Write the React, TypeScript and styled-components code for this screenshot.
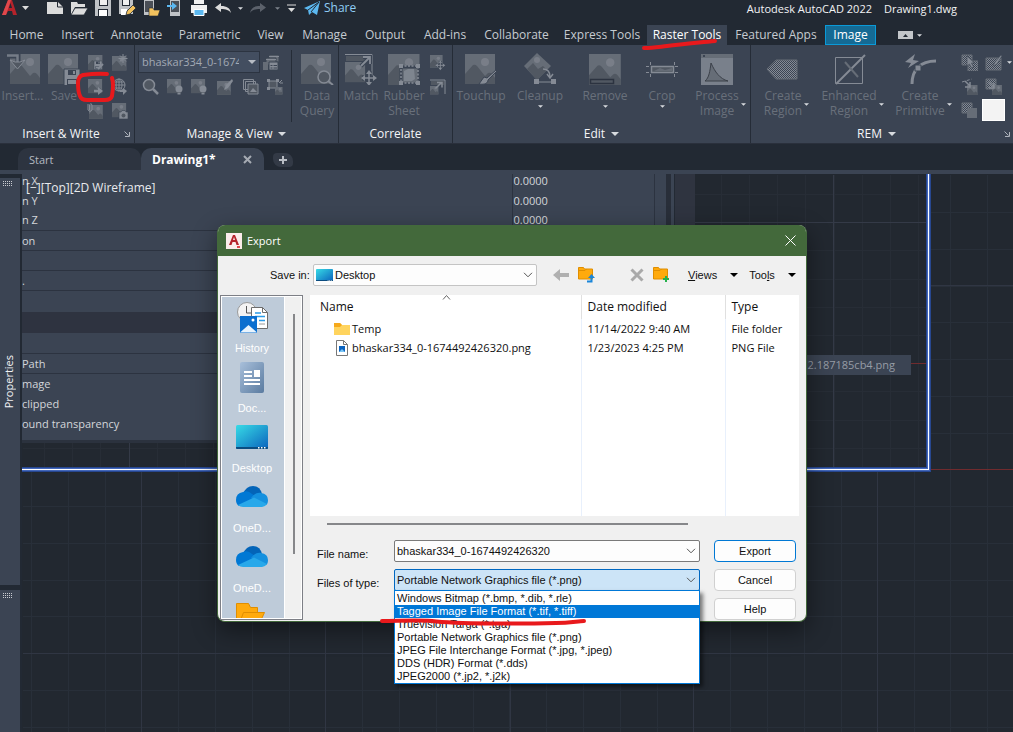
import React from "react";
import styled, { createGlobalStyle } from "styled-components";

const GlobalStyle = createGlobalStyle`
  *, *::before, *::after { box-sizing: border-box; }
  body {
    margin: 0;
    background: #222933;
    font-family: "Open Sans", "Noto Sans", sans-serif;
    font-size: 11px;
    line-height: 16px;
    color: #dfe2e6;
  }
  button, input, select { font: inherit; color: inherit; margin: 0; padding: 0; border: 0; background: none; }
  svg { flex: none; }
`;

const dialogFont = `"Liberation Sans", Arial, sans-serif`;

const Shell = styled.div`
  position: relative;
  display: flex;
  flex-direction: column;
  min-height: 100vh;
  overflow: hidden;
`;

/* ---------- title bar ---------- */

const TitleBar = styled.header`
  display: flex;
  align-items: flex-start;
  justify-content: space-between;
  height: 25px;
  overflow: hidden;
`;

const QuickAccess = styled.div`
  display: flex;
  height: 16px;
`;

const QuickButton = styled.button<{ $w?: number }>`
  width: ${(p) => p.$w ?? 24}px;
  height: 16px;
  display: flex;
  align-items: center;
  justify-content: center;
`;

const AppMenu = styled(QuickButton)`
  justify-content: flex-start;
  padding-left: 2px;
`;

const ShareLink = styled.a`
  display: flex;
  align-items: center;
  gap: 4px;
  height: 16px;
  padding-left: 5px;
  font-size: 12px;
  color: #8fcdf5;
  text-decoration: none;
`;

const WindowTitle = styled.h1`
  display: flex;
  gap: 12px;
  margin: 0;
  padding: 1px 56px 0 0;
  font-size: 11px;
  font-weight: 400;
  color: #f2f3f5;
`;

/* ---------- ribbon tabs ---------- */

const RibbonTabs = styled.nav`
  display: flex;
  height: 20px;
  font-size: 12px;
`;

const RibbonTab = styled.button<{ $w: number; $kind?: "active" | "context" }>`
  width: ${(p) => p.$w}px;
  height: 20px;
  white-space: nowrap;
  line-height: 18px;
  color: ${(p) => (p.$kind ? "#ffffff" : "#c6cbd1")};
  background: ${(p) => (p.$kind === "active" ? "#3b4453" : p.$kind === "context" ? "#156a94" : "transparent")};
  border: ${(p) => (p.$kind === "context" ? "1px solid #0a9ad8" : "0")};
`;

const RibbonToggle = styled.button`
  display: flex;
  align-items: center;
  gap: 4px;
  margin-left: 22px;
`;

/* ---------- ribbon ---------- */

const Ribbon = styled.section`
  display: flex;
  height: 99px;
  background: #3b4453;
  border-bottom: 1px solid #2a303c;
  overflow: hidden;
`;

const RibbonPanel = styled.div<{ $w: number }>`
  flex: 0 0 ${(p) => p.$w}px;
  min-width: 0;
  display: flex;
  flex-direction: column;
  border-right: 1px solid #252c37;
`;

const PanelBody = styled.div<{ $pad?: number }>`
  display: flex;
  height: 80px;
  padding: 5px 0 0 ${(p) => p.$pad ?? 0}px;
`;

const PanelTitle = styled.div<{ $launcher?: boolean }>`
  display: flex;
  align-items: center;
  justify-content: center;
  gap: 6px;
  position: relative;
  height: 17px;
  padding-right: ${(p) => (p.$launcher ? 12 : 0)}px;
  font-size: 12px;
  color: #f4f5f7;
`;

const Launcher = styled.button`
  position: absolute;
  right: 4px;
  top: 6px;
  display: flex;
`;

const BigButton = styled.button<{ $w: number }>`
  flex: 0 0 ${(p) => p.$w}px;
  display: flex;
  flex-direction: column;
  align-items: center;
  color: #69707b;
  font-size: 12px;
  line-height: 15px;
  height: 72px;
  padding-top: 3px;
  white-space: nowrap;
  > svg { margin-bottom: 3px; }
`;

const BigLabel = styled.span`
  position: relative;
  display: block;
  text-align: center;
`;

const ArrowUnder = styled.span`
  display: flex;
  padding-top: 2px;
`;

const ArrowBeside = styled.span`
  position: absolute;
  left: 100%;
  top: 15px;
  display: flex;
  padding-left: 2px;
`;

const SmallGrid = styled.div<{ $cols: string }>`
  display: grid;
  grid-template-columns: ${(p) => p.$cols};
  grid-auto-rows: 24px;
`;

const SmallButton = styled.button`
  display: flex;
  align-items: center;
  justify-content: center;
`;

const ManageColumn = styled.div`
  display: flex;
  flex-direction: column;
  flex: none;
  width: 154px;
  height: 72px;
  border-right: 1px solid #252c37;
`;

const ManageTop = styled.div`
  display: flex;
  align-items: center;
  height: 24px;
  gap: 2px;
`;

const ImagePicker = styled.label`
  position: relative;
  display: flex;
  align-items: center;
  width: 122px;
  height: 22px;
  border: 1px solid #2c3441;
  background: #434e60;
  select {
    appearance: none;
    width: 100px;
    padding-left: 3px;
    color: #a2a9b4;
    overflow: hidden;
  }
  svg { margin-left: 9px; }
`;

const Swatch = styled.button`
  width: 23px;
  height: 22px;
  margin-top: 1px;
  background: #f3f3f3;
  border: 1px solid #ffffff;
  justify-self: center;
`;

/* ---------- document tabs ---------- */

const DocTabs = styled.nav`
  display: flex;
  align-items: flex-end;
  height: 26px;
  padding-left: 18px;
`;

const DocTab = styled.button<{ $active?: boolean }>`
  display: flex;
  align-items: center;
  justify-content: space-between;
  width: 123px;
  height: 22px;
  padding: 1px 12px 0 11px;
  font-size: ${(p) => (p.$active ? 12 : 11)}px;
  border-radius: 10px 10px 0 0;
  background: ${(p) => (p.$active ? "#3b4453" : "#2d3440")};
  color: ${(p) => (p.$active ? "#ffffff" : "#b4b9c1")};
  font-weight: ${(p) => (p.$active ? 700 : 400)};
`;

const NewTab = styled.button`
  width: 20px;
  height: 14px;
  margin: 0 0 3px 9px;
  border-radius: 4px 8px 4px 8px;
  background: #333a46;
  display: flex;
  align-items: center;
  justify-content: center;
`;

/* ---------- workspace ---------- */

const Workspace = styled.main`
  flex: 1;
  display: flex;
  border-top: 4px solid #3b4453;
`;

const Rail = styled.aside`
  flex: 0 0 22px;
  display: flex;
  flex-direction: column;
  gap: 5px;
  padding: 4px 2px 0 0;
  background: #222933;
`;

const RailPart = styled.div<{ $h?: number }>`
  ${(p) => (p.$h ? `height: ${p.$h}px;` : "flex: 1;")}
  display: flex;
  flex-direction: column;
  align-items: center;
  background: #3b4453;
  padding: 3px 5px 0 0;
`;

const RailName = styled.span`
  writing-mode: vertical-rl;
  transform: rotate(180deg);
  margin: 169px -2px 0 0;
  line-height: 16px;
  color: #f2f3f5;
`;

const Canvas = styled.div`
  position: relative;
  flex: 1;
  min-width: 0;
`;

const GridDrawing = styled.svg`
  position: absolute;
  inset: 0;
  width: 100%;
  height: 100%;
`;

const PaletteLayer = styled.div`
  position: relative;
  display: flex;
  width: 673px;
  height: 269px;
  border-bottom: 3px solid #2b323e;
  background: #3b4453;
`;

const PropertyTable = styled.table`
  align-self: flex-start;
  width: 632px;
  border-collapse: collapse;
  table-layout: fixed;
  td {
    height: 20px;
    padding: 0;
    line-height: 15px;
    color: #d3d6da;
  }
  tr:first-child td {
    height: 16px;
    line-height: 14px;
    vertical-align: top;
  }
  td + td { border-left: 1px solid #2c3340; padding-left: 1px; }
  td:first-child { width: 490px; }
`;

const PropertyRow = styled.tr<{ $line?: boolean; $head?: boolean }>`
  border-bottom: ${(p) => (p.$line ? "1px solid #2c3340" : "0")};
  background: ${(p) => (p.$head ? "#2e3340" : "transparent")};
  && td { ${(p) => (p.$head ? "height: 23px; border-top: 3px solid #3b4453;" : "")} }
`;

const PaletteEdge = styled.div`
  flex: 1;
  display: grid;
  grid-template-columns: 11px 5px 3px 1fr;
  border-left: 1px solid #2c3340;
  > :nth-child(2) { background: #282e39; }
  > :nth-child(4) { background: #2f3440; border-left: 1px solid #232a34; }
`;

const ViewLabel = styled.div`
  position: absolute;
  left: 4px;
  top: 6px;
  font-size: 12px;
  color: #e9ebee;
`;

const PathTip = styled.div`
  position: absolute;
  left: 700px;
  top: 181px;
  width: 189px;
  height: 20px;
  padding-right: 16px;
  line-height: 20px;
  text-align: right;
  background: #3b4453;
  color: #969ca6;
`;

/* ---------- export dialog ---------- */

const Dialog = styled.section`
  position: absolute;
  left: 217px;
  top: 225px;
  width: 590px;
  border: 1px solid #43693b;
  border-top: 0;
  border-radius: 8px;
  background: #f0f0f0;
  color: #101010;
  box-shadow: 0 8px 24px rgba(0, 0, 0, 0.45);
`;

const DialogTitle = styled.header`
  display: flex;
  align-items: center;
  gap: 5px;
  height: 31px;
  padding: 0 10px 0 8px;
  background: #43693b;
  color: #ffffff;
  border-radius: 7px 7px 0 0;
  button { margin-left: auto; display: flex; }
`;

const Toolbar = styled.div`
  display: flex;
  align-items: center;
  height: 39px;
  padding: 0 9px 2px 52px;
  font-family: ${dialogFont};
`;

const SaveInLabel = styled.label`
  width: 43px;
  white-space: nowrap;
`;

const ComboShell = styled.div<{ $w?: number; $edge: string; $fill?: string }>`
  display: flex;
  flex: none;
  align-items: center;
  gap: 2px;
  width: ${(p) => (p.$w ? `${p.$w}px` : "100%")};
  height: 22px;
  padding: 0 3px 0 2px;
  border: 1px solid ${(p) => p.$edge};
  border-radius: 2px;
  background: ${(p) => p.$fill ?? "#fdfdfd"};
  select, input {
    flex: 1;
    min-width: 0;
    appearance: none;
    outline: 0;
    line-height: 16px;
  }
`;

const ToolButton = styled.button<{ $ml: number }>`
  display: flex;
  align-items: center;
  margin-left: ${(p) => p.$ml}px;
  gap: 13px;
`;

const DialogBody = styled.div`
  display: flex;
  gap: 7px;
  padding: 0 7px 1px 2px;
`;

const Places = styled.div`
  display: flex;
  width: 83px;
  height: 325px;
  border: 1px solid #7d7f86;
  outline: 1px solid #ffffff;
  outline-offset: -2px;
`;

const PlaceList = styled.div`
  width: 63px;
  height: 323px;
  overflow: hidden;
  padding-top: 2px;
  background: #becbd9;
  border-top: 1px solid #fff;
  border-bottom: 1px solid #fff;
`;

const Place = styled.button`
  display: flex;
  flex-direction: column;
  align-items: center;
  justify-content: space-between;
  width: 62px;
  height: 60px;
  padding-bottom: 3px;
  color: #ffffff;
  font-family: ${dialogFont};
`;

const ScrollTrack = styled.div`
  flex: 1;
  display: flex;
  justify-content: center;
  padding-top: 18px;
  border-left: 1px solid #fff;
  &::after {
    content: "";
    width: 2px;
    height: 240px;
    background: #86878a;
  }
`;

const Main = styled.div`
  flex: 1;
  min-width: 0;
`;

const FileTable = styled.table`
  width: 100%;
  height: 221px;
  border-collapse: collapse;
  table-layout: fixed;
  background: #ffffff;
  th {
    height: 24px;
    padding: 0 0 0 6px;
    text-align: left;
    font-size: 12px;
    font-weight: 400;
    border-left: 1px solid #e0e0e0;
  }
  td {
    height: 19px;
    padding: 0 0 0 6px;
    white-space: nowrap;
    border-left: 1px solid #e8f0fc;
  }
  th:first-child, td:first-child { border-left: 0; }
  th:first-child { padding-left: 10px; }
  td:first-child { padding-left: 24px; }
`;

const FillerRow = styled.tr`
  && td { height: 159px; }
`;

const NameCell = styled.span`
  display: flex;
  align-items: center;
  gap: 2px;
`;

const SortMark = styled.svg`
  position: absolute;
  left: 224px;
  top: 70px;
`;

const HorizontalThumb = styled.div`
  width: 361px;
  height: 2px;
  margin: 7px 0 15px 17px;
  background: #86878a;
`;

const Form = styled.form`
  display: grid;
  grid-template-columns: 77px 306px 96px;
  grid-auto-rows: 22px;
  row-gap: 7px;
  padding-left: 7px;
  font-family: ${dialogFont};
`;

const FieldLabel = styled.label`
  padding-top: 6px;
  white-space: nowrap;
`;

const PushButton = styled.button<{ $primary?: boolean }>`
  width: 82px;
  height: 22px;
  justify-self: end;
  border: 1px solid ${(p) => (p.$primary ? "#0078d4" : "#d0d0d0")};
  border-radius: 4px;
  background: #fdfdfd;
`;

const TypeField = styled.div`
  position: relative;
`;

const TypeList = styled.ul`
  position: absolute;
  left: 0;
  top: 21px;
  width: 100%;
  margin: 0;
  padding: 1px 0 0;
  list-style: none;
  border: 1px solid #0078d7;
  background: #ffffff;
  box-shadow: 3px 3px 4px rgba(0, 0, 0, 0.5);
`;

const TypeOption = styled.li<{ $on: boolean }>`
  height: 13px;
  line-height: 13px;
  padding-left: 2px;
  color: ${(p) => (p.$on ? "#ffffff" : "#101010")};
  background: ${(p) => (p.$on ? "#0078d7" : "transparent")};
`;

const Ink = styled.svg`
  position: absolute;
  left: 0;
  top: 0;
  width: 1013px;
  height: 732px;
  pointer-events: none;
`;

/* ---------- drawings ---------- */

const L = "#666d77";
const D = "#515862";
const H = "#858b95";
const BG = "#3b4453";
const W = "#dcdcdc";

const Down = ({ w = 8, color = "#d8dbdf" }: { w?: number; color?: string }) => (
  <svg width={w} height={Math.ceil(w / 2)} viewBox="0 0 8 4"><path d="M0 0h8L4 4z" fill={color} /></svg>
);

const Chevron = ({ color = "#555" }: { color?: string }) => (
  <svg width="10" height="6" viewBox="0 0 10 6" fill="none" stroke={color}><path d="M1 .8l4 4 4-4" /></svg>
);

/* A picture tile: sky, sun and two hills, in a 30-unit box. */
const Tile = ({ x = 0, y = 0, s = 1 }: { x?: number; y?: number; s?: number }) => (
  <g transform={`translate(${x} ${y}) scale(${s})`}>
    <path d="M0 0h30v30H0z" fill={L} />
    <circle cx="20" cy="8" r="4" fill={H} opacity=".6" />
    <path d="M0 20l8-9q2-1 4 1l8 10 3-3q2-1 4 1l3 4v6H0z" fill={D} />
  </g>
);

const Big = ({ children }: { children: React.ReactNode }) => (
  <svg width="34" height="32" viewBox="0 0 34 32" fill="none">{children}</svg>
);
const Small = ({ children }: { children: React.ReactNode }) => (
  <svg width="17" height="17" viewBox="0 0 17 17" fill="none">{children}</svg>
);

const Floppy = ({ x, y, s = 1 }: { x: number; y: number; s?: number }) => (
  <g transform={`translate(${x} ${y}) scale(${s})`}>
    <path d="M0 0h16v17H0z" fill={H} stroke={BG} />
    <path d="M4 1h8v5H4zM3 10h10v6H3z" fill={BG} />
    <path d="M9 2h2v3H9zM4 11h8v4H4z" fill={H} />
  </g>
);

const Move = ({ x, y, s = 1 }: { x: number; y: number; s?: number }) => (
  <g transform={`translate(${x} ${y}) scale(${s})`}>
    <path d="M7 0v14M0 7h14" stroke={BG} strokeWidth="5" />
    <path d="M7 2v10M2 7h10" stroke={H} strokeWidth="1.500" />
    <path d="M7-1l3 4H4zM7 15l3-4H4zM-1 7l4-3v6zM15 7l-4-3v6z" fill={H} />
  </g>
);

const Hatch = () => (
  <defs>
    <pattern id="hatch" width="2" height="2" patternUnits="userSpaceOnUse">
      <path d="M0 0h1v1H0zM1 1h1v1H1z" fill={H} />
    </pattern>
  </defs>
);

const bigIcons: Record<string, React.ReactNode> = {
  insert: <Big><Tile x={4} y={1} /><path d="M1 3h11v10" stroke={BG} strokeWidth="5" /><path d="M1 2.500h10.500v12" stroke={H} strokeWidth="2.500" opacity=".8" /><path d="M4 7l7.500 9L19 7l-5 2h-5z" fill={D} stroke={H} /></Big>,
  save: <Big><Tile x={1} y={1} /><Floppy x={17} y={16} /></Big>,
  query: <Big><Tile x={1} y={1} /><circle cx="24" cy="24" r="6" fill={D} stroke={H} strokeWidth="1.500" /><path d="M28 28l5 4" stroke={H} strokeWidth="2" /></Big>,
  match: <Big><path d="M1 1.500h27v23" stroke={H} /><path d="M2 3h25v5H2z" fill={D} /><Tile x={1} y={9} s={.67} /><path d="M17 13l8-8M19 4h7v7" stroke={BG} strokeWidth="4" /><path d="M17 13l8-8M19 4h7v7" stroke={H} strokeWidth="1.800" /><Move x={18} y={18} /></Big>,
  rubber: <Big><Tile x={1} y={1} s={1.05} /><path d="M14 14h18v17H14z" fill={L} stroke={BG} strokeWidth="3" /><path d="M14 13h17v17H14z" stroke={H} strokeDasharray="2 1.500" strokeWidth="1.500" /><path d="M12 11h4v4h-4zM29 11h4v4h-4zM12 28h4v4h-4zM29 28h4v4h-4z" fill={H} /><path d="M17 18l4-2h6l1 10-3 2h-8z" fill={H} opacity=".8" /></Big>,
  touchup: <Big><Tile x={1} y={1} /><path d="M32 17l-9 8-3-1-5 7c6 1 9-1 9-4l9-9z" fill={H} stroke={BG} /></Big>,
  cleanup: <Big><path d="M14 0l14 13-14 14L1 13z" fill={L} /><circle cx="14" cy="7" r="3" fill={H} opacity=".6" /><path d="M4 16l6-6 5 6 5-3 4 4-10 10z" fill={D} /><path d="M20 16c5 0 7 3 7 8m-3-3l3 4 3-4" stroke={H} strokeWidth="1.500" /><path d="M14 29h17" stroke={H} /><path d="M11 26h5v5h-5zM28 26h5v5h-5z" fill={H} /></Big>,
  remove: <Big><Tile x={1} y={1} s={1.06} /><path d="M2.500 26.500h23v4h-23z" fill={D} stroke="#2c3340" strokeWidth="1.500" /></Big>,
  crop: <Big><path d="M6.500 13.500h22v6h-22z" fill={D} stroke={H} strokeWidth="1.500" /><path d="M9 18l6-3 5 2 7-2v3z" fill={L} /><path d="M1 13.500h3M1 19.500h3M30 13.500h3M30 19.500h3M5.500 9v3M29.500 9v3M5.500 21v3M29.500 21v3" stroke={H} /></Big>,
  process: <Big><path d="M1 1h32v31H1z" fill={H} opacity=".85" /><path d="M1 1h32v4H1z" fill={L} /><path d="M3 2h2v2H3z" fill={BG} /><path d="M5 28c4-3 5-10 6-18 4 9 9 16 17 18z" fill={L} stroke="#3b4049" /></Big>,
  region: <Big><Hatch /><path d="M1 16l9-9h21v19H10z" fill="url(#hatch)" stroke={L} /></Big>,
  enhanced: <Big><path d="M3.500 4.500h27v26h-27z" stroke={H} /><path d="M4 31L33 2" stroke={H} strokeWidth="2" /><path d="M13 9l13 15" stroke={L} strokeWidth="2" /></Big>,
  primitive: <Big><path d="M9 31c0-14 8-23 24-23" stroke={H} strokeWidth="3" /><path d="M12 1L2 9l6 1-3 5 11-7-6-1z" fill={H} /><path d="M12 12h6v6h-6z" fill={H} stroke={BG} /></Big>,
};

const smallIcons: Record<string, React.ReactNode> = {
  saveAs: <Small><Tile x={1} y={1} s={.48} /><Floppy x={7} y={7} s={.5} /><path d="M11 15l5-5" stroke={H} strokeWidth="2" /></Small>,
  fresh: <Small><Tile x={1} y={2} s={.48} /><path d="M12 0v9M7.500 4.500h9M9 1.500l6 6M15 1.500l-6 6" stroke={H} /></Small>,
  exportPic: <Small><Tile x={1} y={1} s={.47} /><path d="M7 13h5" stroke={H} strokeWidth="2.500" /><path d="M11 9l5 4-5 4z" fill={H} /></Small>,
  globe: <Small><circle cx="8" cy="7" r="6" stroke={H} /><path d="M2 7h12M8 1v12M3 4h10M3 10h8" stroke={H} /><ellipse cx="8" cy="7" rx="3" ry="6" stroke={H} /><path d="M9 13h4" stroke={H} strokeWidth="2" /><path d="M12 10l4 3-4 4z" fill={H} /></Small>,
  clip: <Small><Tile x={2} y={3} s={.46} /><path d="M1 2v6q2 3 4 0V3q-1-3-2.500 0v5" stroke={H} /></Small>,
  camera: <Small><Tile x={1} y={1} s={.47} /><path d="M8 10h2l1-1.500h3l1 1.500h2v7H8z" fill={H} stroke={BG} strokeWidth=".6" /><circle cx="12.500" cy="13.500" r="2" fill={D} /></Small>,
  cards: <Small><path d="M7 1h10v7h-10z" fill={L} stroke={BG} /><path d="M7 2.500h10" stroke={H} /><path d="M4 4h10v7H4z" fill={L} stroke={BG} /><path d="M4 5.500h10" stroke={H} /><path d="M1 8h5v8H1z" fill={L} /><path d="M7 8h9v8H7z" fill={H} stroke={BG} /><path d="M8.500 11.500h2M11.500 11.500h3.500M8.500 14h2M11.500 14h3.500" stroke={BG} /></Small>,
  zoom: <Small><circle cx="7" cy="7" r="5.500" fill={D} stroke={H} strokeWidth="1.500" /><path d="M11 11l5 5" stroke={H} strokeWidth="2.500" /></Small>,
  bulb: <Small><Tile x={1} y={1} s={.47} /><circle cx="13" cy="11" r="3.500" fill={H} /><path d="M11.500 15h3v1.500h-3z" fill={H} /></Small>,
  brush: <Small><Tile x={1} y={3} s={.46} /><path d="M16 1l-6 6-2 5 4-2 5-7z" fill={H} /></Small>,
  stack: <Small><path d="M1.500 1.500h10v10h-10zM3.500 3.500h10v10h-10z" stroke={H} /><path d="M6 6h10v10H6z" fill={D} stroke={H} /><path d="M8 14l3-4 4 4z" fill={H} /></Small>,
  nodes: <Small><path d="M3 3h8v7H3z" fill={D} stroke={H} /><path d="M1 1h3v3H1zM10 1h3v3h-3zM1 9h3v3H1z" fill={H} /><Tile x={9} y={9} s={.25} /><path d="M13 5l3-3M14 5h3" stroke={H} /></Small>,
  nudge: <Small><Tile x={1} y={1} s={.42} /><Move x={7} y={7} s={.62} /></Small>,
  scale: <Small><path d="M1 2h15v14" stroke={H} /><path d="M2 3h13v4H2z" fill={D} /><Tile x={1} y={8} s={.28} /><path d="M7 10l5-5M8 4.500h5v5" stroke={H} strokeWidth="1.500" /></Small>,
  pickHatch: <Small><path d="M1 1h10v10H1zM7 7h10v10H7z" fill="url(#hatch)" stroke={L} /><path d="M6 2v10l2.500-2 2 4 2-1-2-4h3z" fill={H} stroke={BG} strokeWidth=".6" /></Small>,
  editHatch: <Small><path d="M1 4h15v12H1z" fill="url(#hatch)" stroke={L} /><path d="M16 1l-6 7-2 4 4-2 5-8z" fill={H} stroke={BG} strokeWidth=".6" /></Small>,
  pathIn: <Small><path d="M1 4l10-3" stroke={H} strokeDasharray="3 2" /><Tile x={6} y={7} s={.35} /><path d="M4 3l5 5M9 4v5H4" stroke={H} strokeWidth="1.500" /></Small>,
  hatchIn: <Small><path d="M1 1h10v10H1z" fill="url(#hatch)" stroke={L} /><Tile x={7} y={7} s={.33} /><path d="M4 4l5 5M9 5v5H4" stroke={H} strokeWidth="1.500" /></Small>,
  overlap: <Small><path d="M1 1h10v10H1z" fill="url(#hatch)" stroke={L} /><path d="M6 6h10v10H6z" fill={L} /></Small>,
};

const LauncherMark = <svg width="6" height="6" viewBox="0 0 6 6" fill="none" stroke="#aeb3bb"><path d="M.5.5l4 4M5.500 1v4.500H1" /></svg>;
const Grip = <svg width="10" height="5" viewBox="0 0 10 5"><path d="M0 .5h10M0 2.500h10M0 4.500h10" stroke="#c9ccd1" strokeDasharray="1 1" /></svg>;

const Folder = ({ children }: { children?: React.ReactNode }) => (
  <svg width="17" height="17" viewBox="0 0 17 17">
    <path d="M.5 1.500h5l1 1.500h8v10h-14z" fill="#ffaa0d" stroke="#e08e00" />
    <path d="M1 4.500h6l1.500-1.500" fill="none" stroke="#e08e00" />
    {children}
  </svg>
);

const ScreenIcon = ({ w, h }: { w: number; h: number }) => (
  <svg width={w} height={h} viewBox="0 0 32 24" preserveAspectRatio="none">
    <defs><linearGradient id="screen" x1="0" y1="0" x2="1" y2="1"><stop offset="0" stopColor="#37dbe6" /><stop offset="1" stopColor="#0b63bd" /></linearGradient></defs>
    <rect width="32" height="24" rx="1.500" fill="url(#screen)" />
    <path d="M0 22h32v1q0 1-1 1H1q-1 0-1-1z" fill="#0b4c80" />
    <path d="M22 22h1.500v1.500H22zM25 22h1.500v1.500H25zM28 22h1.500v1.500H28z" fill="#fff" />
  </svg>
);

const Cloud = () => (
  <svg width="34" height="40" viewBox="0 0 34 40">
    <path d="M8 15Q11 7 18 7q7 0 9 8l-9 6z" fill="#0364b8" />
    <path d="M1 21q0-7 7-8 5-2 9 2l9 5-22 7q-3-2-3-6z" fill="#0078d4" />
    <path d="M16 19q4-6 10-5 7 1 7 7 0 4-2 5z" fill="#1490df" />
    <path d="M3 26l16-7.500L32 25q-2 3-5 3H8q-3 0-5-2z" fill="#28a8ea" />
  </svg>
);

const placeIcons = {
  history: <svg width="34" height="40" viewBox="0 0 34 40"><circle cx="12" cy="13" r="9.500" fill="#f3f3f3" stroke="#9a9a9a" /><path d="M11.500 7v7h5" fill="none" stroke="#555" /><path d="M16.500 8.500h11l5 5v16h-16z" fill="#fff" stroke="#6c6c6c" /><path d="M27.500 8.500v5h5" fill="none" stroke="#6c6c6c" /><path d="M20 14h6M20 17.500h10M24 21.500h6" stroke="#2a9be8" strokeWidth="1.500" /><path d="M24 25h6" stroke="#9a9a9a" /><path d="M5 17h17v17H5z" fill="#0b6fcf" /><path d="M5 33.500l8.500-7.500 8.500 7.500z" fill="#e9f4fd" /><circle cx="18" cy="21" r="1.500" fill="#fff" /></svg>,
  documents: <svg width="34" height="36" viewBox="0 0 34 36"><defs><linearGradient id="doc" x1="0" y1="0" x2="1" y2="1"><stop offset="0" stopColor="#a8bfda" /><stop offset="1" stopColor="#5a7ba0" /></linearGradient></defs><rect x="5" y="3" width="24" height="31" rx="2" fill="url(#doc)" /><path d="M9 13h8M9 17h8M9 21h16M9 25h16" stroke="#fff" strokeWidth="2" /><path d="M19 11h6v7h-6z" fill="#fff" /></svg>,
  desktop: <svg width="34" height="34" viewBox="0 0 34 34"><g transform="translate(1 6)"><ScreenIcon w={32} h={24} /></g></svg>,
  folder: <svg width="34" height="30" viewBox="0 0 34 30"><path d="M1.500 4.500h12l2 4h7v18h-21z" fill="#ffaa0d" stroke="#e08e00" /><path d="M8.500 13.500h21l-6 13h-20z" fill="#ffaa0d" stroke="#e08e00" /></svg>,
};

const range = (from: number, to: number, step: number) => {
  const out: number[] = [];
  for (let v = from; v <= to; v += step) out.push(Math.round(v));
  return out;
};

const CanvasGrid = () => (
  <GridDrawing>
    <g transform="translate(-22 -174)" shapeRendering="crispEdges">
      <path d="M0 170h3000v2000H0z" fill="#222830" />
      <g transform="translate(.5 .5)">
        <path d={range(950, 2900, 36.8).map((x) => `M${x} 174V2000`).join("") + range(31, 928, 36.8).map((x) => `M${x} 469V2000`).join("")} stroke="#282f39" />
        <path d={range(212, 469, 36.8).map((y) => `M928 ${y}H3000`).join("") + range(506, 1900, 36.8).map((y) => `M22 ${y}H3000`).join("")} stroke="#282f39" />
        <path d="M141 469V2000M325 469V2000M510 469V2000M693 469V2000M877 469V2000M928 285H3000M22 653H3000" stroke="#303643" />
        <path d={range(44, 920, 28.2).map((x) => `M${x} 174V469`).join("") + range(194, 460, 28.2).map((y) => `M22 ${y}H928`).join("")} stroke="#272d36" />
        <path d="M129 174V469M833 174V469M22 222H928" stroke="#343a47" />
        <path d="M900 363h28M929 469h2000" stroke="#702b2e" />
        <path d="M20 469h908V170" fill="none" stroke="#27478f" strokeWidth="5" />
        <path d="M20 469h908V170" fill="none" stroke="#4468bb" strokeWidth="3" />
        <path d="M20 469h908V170" fill="none" stroke="#ffffff" />
      </g>
    </g>
  </GridDrawing>
);

/* ---------- data ---------- */

type Tab = { name: string; w: number; kind?: "active" | "context" };
const tabs: Tab[] = [
  { name: "Home", w: 53 }, { name: "Insert", w: 49 }, { name: "Annotate", w: 69 }, { name: "Parametric", w: 77 },
  { name: "View", w: 45 }, { name: "Manage", w: 63 }, { name: "Output", w: 58 }, { name: "Add-ins", w: 62 },
  { name: "Collaborate", w: 81 }, { name: "Express Tools", w: 90 }, { name: "Raster Tools", w: 80, kind: "active" },
  { name: "Featured Apps", w: 98 }, { name: "Image", w: 51, kind: "context" },
];

const fileTypes = [
  "Windows Bitmap (*.bmp, *.dib, *.rle)", "Tagged Image File Format (*.tif, *.tiff)", "Truevision Targa (*.tga)",
  "Portable Network Graphics file (*.png)", "JPEG File Interchange Format (*.jpg, *.jpeg)", "DDS (HDR) Format (*.dds)",
  "JPEG2000 (*.jp2, *.j2k)",
];

const properties: { label: string; value?: string; line?: boolean; head?: boolean }[] = [
  { label: "n X", value: "0.0000" }, { label: "n Y", value: "0.0000" }, { label: "n Z", value: "0.0000", line: true },
  { label: "on", line: true }, { label: "", line: true }, { label: ".", line: true }, { label: "", line: true },
  { label: "", head: true }, { label: "", line: true }, { label: "Path", line: true },
  { label: "mage" }, { label: "clipped" }, { label: "ound transparency" },
];

const Tool = ({ icon, lines, w, arrow }: { icon: string; lines: string[]; w: number; arrow?: "under" | "beside" }) => (
  <BigButton $w={w}>
    {bigIcons[icon]}
    <BigLabel>
      {lines.map((t) => <React.Fragment key={t}>{t}<br /></React.Fragment>)}
      {arrow === "beside" && <ArrowBeside><Down w={5} /></ArrowBeside>}
    </BigLabel>
    {arrow === "under" && <ArrowUnder><Down w={5} /></ArrowUnder>}
  </BigButton>
);

const Mini = ({ icon, label }: { icon: string; label: string }) => <SmallButton aria-label={label}>{smallIcons[icon]}</SmallButton>;

export default function App() {
  return (
    <Shell>
      <GlobalStyle />
      <TitleBar>
        <QuickAccess>
          <AppMenu $w={43} aria-label="Application menu">
            <svg width="30" height="16" viewBox="0 0 30 16"><path d="M0 15L6 0h4l5 15h-4l-1-4H6l-2 4zM7 8h3L8.500 3z" fill="#b5232b" /><path d="M0 15L6 0h3L4 15z" fill="#e0484c" /><path d="M20 6h7l-3.500 4z" fill={W} /></svg>
          </AppMenu>
          <QuickButton aria-label="New"><svg width="17" height="16" viewBox="0 0 17 16"><path d="M0 2h11l5 5v7H0z" fill={W} /><path d="M10.500 2v5H16" fill="none" stroke="#222933" /></svg></QuickButton>
          <QuickButton aria-label="Open"><svg width="18" height="16" viewBox="0 0 18 16"><path d="M1 2h6l1 2h7v3H5l-4 8z" fill={W} /><path d="M5 8h13l-4 7H1z" fill={W} stroke="#222933" strokeWidth=".8" /></svg></QuickButton>
          <QuickButton aria-label="Save"><svg width="17" height="16" viewBox="0 0 17 16"><path d="M0 0h16v16H0z" fill="#bfc2c6" /><path d="M4 0h9v6H4z" fill="#222933" /><path d="M5 0h7v5H5z" fill="#efefef" /><path d="M3 9h10v7H3z" fill="#222933" /><path d="M4 10h8v6H4z" fill="#fff" /></svg></QuickButton>
          <QuickButton aria-label="Save as"><svg width="17" height="16" viewBox="0 0 17 16"><path d="M0 0h14v14H0z" fill="#bfc2c6" /><path d="M3 0h8v6H3z" fill="#222933" /><path d="M4 0h6v5H4z" fill="#efefef" /><path d="M2 9h6v6H2z" fill="#fff" /><path d="M7 15l1-4 6-6 3 3-6 6z" fill="#f3c25e" stroke="#222933" strokeWidth=".8" /></svg></QuickButton>
          <QuickButton aria-label="Open from mobile"><svg width="17" height="16" viewBox="0 0 17 16"><path d="M1 0h10v15H1z" fill="#bfc2c6" /><path d="M2 1h8v11H2z" fill="#4a4f57" /><path d="M6 8h4l1 2h6l-2 6H6z" fill="#f3c25e" stroke="#222933" strokeWidth=".6" /></svg></QuickButton>
          <QuickButton aria-label="Save to mobile"><svg width="17" height="16" viewBox="0 0 17 16"><path d="M3 0h10v16H3z" fill="#bfc2c6" /><path d="M4 1h8v11H4z" fill="#4a4f57" /><path d="M0 5h5V2l5 4-5 4V7H0z" fill="#5cb8f0" /></svg></QuickButton>
          <QuickButton aria-label="Plot"><svg width="17" height="16" viewBox="0 0 17 16"><path d="M3 0h10v4H3zM0 5h16v8H0z" fill="#f1f1f1" /><path d="M3 9.500h10v6H3z" fill="#5cb8f0" stroke="#fff" /></svg></QuickButton>
          <QuickButton aria-label="Undo"><svg width="18" height="14" viewBox="0 0 18 14"><path d="M7 2v3c6 0 9 2 10 7-2-3-5-4-10-4v3L1 6.500z" fill={W} /></svg></QuickButton>
          <QuickButton $w={10} aria-label="Undo history"><Down w={5} /></QuickButton>
          <QuickButton $w={26} aria-label="Redo"><svg width="18" height="14" viewBox="0 0 18 14"><path d="M11 2v3C5 5 2 7 1 12c2-3 5-4 10-4v3l6-4.500z" fill="#5b616b" /></svg></QuickButton>
          <QuickButton $w={12} aria-label="Redo history"><Down w={5} color="#7d838c" /></QuickButton>
          <QuickButton $w={16} aria-label="Customize"><svg width="9" height="9" viewBox="0 0 9 9"><path d="M0 1h9" stroke={W} /><path d="M1 4h7L4.500 8z" fill={W} /></svg></QuickButton>
          <ShareLink href="#share"><svg width="16" height="16" viewBox="0 0 16 16"><path d="M0 8L16 1l-3 14-5-3-3 3-1-5z" fill="#5cb8f0" /><path d="M4 10l11-8-8 10" fill="none" stroke="#222933" /></svg>Share</ShareLink>
        </QuickAccess>
        <WindowTitle><span>Autodesk AutoCAD 2022</span><span>Drawing1.dwg</span></WindowTitle>
      </TitleBar>

      <RibbonTabs>
        {tabs.map((t) => <RibbonTab key={t.name} $w={t.w} $kind={t.kind}>{t.name}</RibbonTab>)}
        <RibbonToggle aria-label="Minimize ribbon">
          <svg width="15" height="8" viewBox="0 0 15 8"><path d="M0 0h15v8H0z" fill="#c3c6ca" /><path d="M5 6l2.500-3L10 6z" fill="#222933" /></svg>
          <Down w={5} />
        </RibbonToggle>
      </RibbonTabs>

      <Ribbon>
        <RibbonPanel $w={135}>
          <PanelBody>
            <Tool icon="insert" lines={["Insert..."]} w={45} />
            <Tool icon="save" lines={["Save"]} w={38} />
            <SmallGrid $cols="24px 24px">
              <Mini icon="saveAs" label="Save as" /><Mini icon="fresh" label="New image" />
              <Mini icon="exportPic" label="Export" /><Mini icon="globe" label="Export world file" />
              <Mini icon="clip" label="Attach" /><Mini icon="camera" label="Capture" />
            </SmallGrid>
          </PanelBody>
          <PanelTitle $launcher><span>Insert &amp; Write</span><Launcher aria-label="Insert and Write options">{LauncherMark}</Launcher></PanelTitle>
        </RibbonPanel>

        <RibbonPanel $w={204}>
          <PanelBody $pad={3}>
            <ManageColumn>
              <ManageTop>
                <ImagePicker aria-label="Image">
                  <select><option>bhaskar334_0-1674</option></select>
                  <Down w={8} color="#b7bcc4" />
                </ImagePicker>
                <Mini icon="cards" label="Image manager" />
              </ManageTop>
              <SmallGrid $cols="24px 24px 24px 28px 24px 24px">
                <Mini icon="zoom" label="Zoom to image" /><Mini icon="bulb" label="Show" /><Mini icon="bulb" label="Hide" />
                <Mini icon="brush" label="Color" /><Mini icon="stack" label="Draw order" /><Mini icon="nodes" label="Frames" />
              </SmallGrid>
            </ManageColumn>
            <Tool icon="query" lines={["Data", "Query"]} w={50} />
          </PanelBody>
          <PanelTitle><span>Manage &amp; View</span><Down w={8} /></PanelTitle>
        </RibbonPanel>

        <RibbonPanel $w={114}>
          <PanelBody>
            <Tool icon="match" lines={["Match"]} w={44} />
            <Tool icon="rubber" lines={["Rubber", "Sheet"]} w={42} />
            <SmallGrid $cols="24px"><Mini icon="nudge" label="Displace" /><Mini icon="scale" label="Scale" /></SmallGrid>
          </PanelBody>
          <PanelTitle>Correlate</PanelTitle>
        </RibbonPanel>

        <RibbonPanel $w={298}>
          <PanelBody>
            <Tool icon="touchup" lines={["Touchup"]} w={56} />
            <Tool icon="cleanup" lines={["Cleanup"]} w={62} arrow="under" />
            <Tool icon="remove" lines={["Remove"]} w={68} arrow="under" />
            <Tool icon="crop" lines={["Crop"]} w={46} arrow="under" />
            <Tool icon="process" lines={["Process", "Image"]} w={64} arrow="beside" />
          </PanelBody>
          <PanelTitle><span>Edit</span><Down w={8} /></PanelTitle>
        </RibbonPanel>

        <RibbonPanel $w={264}>
          <PanelBody>
            <Tool icon="region" lines={["Create", "Region"]} w={64} arrow="beside" />
            <Tool icon="enhanced" lines={["Enhanced", "Region"]} w={68} arrow="beside" />
            <Tool icon="primitive" lines={["Create", "Primitive"]} w={74} arrow="beside" />
            <SmallGrid $cols="24px 24px 8px">
              <Mini icon="pickHatch" label="Select" /><Mini icon="editHatch" label="Edit" /><SmallButton aria-label="More"><Down w={5} /></SmallButton>
              <Mini icon="pathIn" label="Merge vector" /><Mini icon="hatchIn" label="Merge raster" /><span />
              <Mini icon="overlap" label="Overlap" /><Swatch aria-label="Region color" />
            </SmallGrid>
          </PanelBody>
          <PanelTitle $launcher><span>REM</span><Down w={8} /><Launcher aria-label="REM options">{LauncherMark}</Launcher></PanelTitle>
        </RibbonPanel>
      </Ribbon>

      <DocTabs>
        <DocTab>Start</DocTab>
        <DocTab $active><span>Drawing1*</span><svg width="9" height="9" viewBox="0 0 9 9" stroke="#a6abb3" strokeWidth="2"><path d="M1 1l7 7M8 1l-7 7" /></svg></DocTab>
        <NewTab aria-label="New tab"><svg width="8" height="8" viewBox="0 0 8 8" stroke="#b9bdc4" strokeWidth="2"><path d="M4 0v8M0 4h8" /></svg></NewTab>
      </DocTabs>

      <Workspace>
        <Rail>
          <RailPart $h={407}>{Grip}<RailName>Properties</RailName></RailPart>
          <RailPart>{Grip}</RailPart>
        </Rail>
        <Canvas>
          <CanvasGrid />
          <PathTip>2.187185cb4.png</PathTip>
          <PaletteLayer>
            <PropertyTable>
              <tbody>
                {properties.map((p, i) => (
                  <PropertyRow key={i} $line={p.line} $head={p.head}><td>{p.label}</td><td>{p.value}</td></PropertyRow>
                ))}
              </tbody>
            </PropertyTable>
            <PaletteEdge><i /><i /><i /><i /></PaletteEdge>
          </PaletteLayer>
          <ViewLabel>[−][Top][2D Wireframe]</ViewLabel>
        </Canvas>
      </Workspace>

      <Dialog role="dialog" aria-label="Export">
        <DialogTitle>
          <svg width="16" height="16" viewBox="0 0 16 16"><path d="M0 0h16v16H0z" fill="#fbeceb" /><path d="M3 12L7 2h2l4 10h-2.500l-1-3h-3l-1 3zM7 7h2L8 4z" fill="#b5232b" /><path d="M11 13h3v2h-3z" fill="#e0484c" /></svg>
          <span>Export</span>
          <button aria-label="Close"><svg width="11" height="11" viewBox="0 0 11 11" stroke="#fff"><path d="M.5.5l10 10M10.500.5l-10 10" /></svg></button>
        </DialogTitle>
        <Toolbar>
          <SaveInLabel htmlFor="savein">Save in:</SaveInLabel>
          <ComboShell $w={224} $edge="#c4c4c4">
            <ScreenIcon w={17} h={12} />
            <select id="savein"><option>Desktop</option></select>
            <Chevron />
          </ComboShell>
          <ToolButton $ml={16} aria-label="Back"><svg width="16" height="14" viewBox="0 0 16 14"><path d="M0 7l7-6v4h9v4H7v4z" fill="#b0b0b0" /></svg></ToolButton>
          <ToolButton $ml={9} aria-label="Up one level"><Folder><path d="M9 15.500h4.500V11" fill="none" stroke="#1a86d9" strokeWidth="2" /><path d="M10 12l3.500-4 3.500 4z" fill="#1a86d9" /></Folder></ToolButton>
          <ToolButton $ml={35} aria-label="Delete"><svg width="14" height="14" viewBox="0 0 14 14" stroke="#a9a9a9" strokeWidth="3"><path d="M1.500 1.500l11 11M12.500 1.500l-11 11" /></svg></ToolButton>
          <ToolButton $ml={9} aria-label="New folder"><Folder><path d="M13 10v6M10 13h6" stroke="#25b14c" strokeWidth="2" /></Folder></ToolButton>
          <ToolButton $ml={18}><span><u>V</u>iews</span><Down w={8} color="#000" /></ToolButton>
          <ToolButton $ml={11}><span>Too<u>l</u>s</span><Down w={8} color="#000" /></ToolButton>
        </Toolbar>
        <SortMark width="9" height="5" viewBox="0 0 9 5" fill="none" stroke="#666"><path d="M1 4.500l3.500-4 3.500 4" /></SortMark>
        <DialogBody>
          <Places>
            <PlaceList>
              <Place>{placeIcons.history}History</Place>
              <Place>{placeIcons.documents}Doc...</Place>
              <Place>{placeIcons.desktop}Desktop</Place>
              <Place><Cloud />OneD...</Place>
              <Place><Cloud />OneD...</Place>
              <Place aria-label="Folder">{placeIcons.folder}</Place>
            </PlaceList>
            <ScrollTrack />
          </Places>
          <Main>
            <FileTable>
              <colgroup><col /><col width="144" /><col width="74" /></colgroup>
              <thead><tr><th>Name</th><th>Date modified</th><th>Type</th></tr></thead>
              <tbody>
                <tr>
                  <td><NameCell><svg width="16" height="16" viewBox="0 0 16 16"><path d="M0 2h6l2 2h8v10H0z" fill="#ffd45e" /><path d="M0 2h6l2 2-2 2H0z" fill="#f6a91b" /></svg>Temp</NameCell></td>
                  <td>11/14/2022 9:40 AM</td><td>File folder</td>
                </tr>
                <tr>
                  <td><NameCell><svg width="16" height="16" viewBox="0 0 16 16"><path d="M2.500.5h7l4 4v11h-11z" fill="#fff" stroke="#777" /><path d="M9.500.5v4h4" fill="none" stroke="#777" /><path d="M5 6h6v6H5z" fill="#0b63c0" /><path d="M5 12l3-3 3 3z" fill="#7cc6f5" /></svg>bhaskar334_0-1674492426320.png</NameCell></td>
                  <td>1/23/2023 4:25 PM</td><td>PNG File</td>
                </tr>
                <FillerRow><td /><td /><td /></FillerRow>
              </tbody>
            </FileTable>
            <HorizontalThumb />
            <Form onSubmit={(e) => e.preventDefault()}>
              <FieldLabel htmlFor="fname">File name:</FieldLabel>
              <ComboShell $edge="#7a7a7a"><input id="fname" defaultValue="bhaskar334_0-1674492426320" /><Chevron /></ComboShell>
              <PushButton $primary>Export</PushButton>
              <FieldLabel htmlFor="ftype">Files of type:</FieldLabel>
              <TypeField>
                <ComboShell $edge="#0067c0" $fill="#cce4f7">
                  <select id="ftype" defaultValue={fileTypes[3]}>{fileTypes.map((t) => <option key={t}>{t}</option>)}</select>
                  <Chevron />
                </ComboShell>
                <TypeList role="listbox" aria-label="Files of type">
                  {fileTypes.map((t, i) => <TypeOption key={t} role="option" aria-selected={i === 1} $on={i === 1}>{t}</TypeOption>)}
                </TypeList>
              </TypeField>
              <PushButton>Cancel</PushButton>
              <span /><span />
              <PushButton>Help</PushButton>
            </Form>
          </Main>
        </DialogBody>
      </Dialog>

      <Ink fill="none" stroke="#e8191c" strokeLinecap="round" strokeWidth="4">
        <path d="M107 74C98 73 90 74 83 75c-4 1-5 4-5 8 0 5 0 9 2 13 1 3 3 4 7 4h18c4 0 6-1 7-4 1-6 2-12 0-18" />
        <path d="M644 48c8 0 14-1 23-2 15-2 28-3 48-5" />
        <path d="M382 621c16 0 34-1 50 0 24 3 90 3 124 2 14 0 22-2 28-2" />
      </Ink>
    </Shell>
  );
}
